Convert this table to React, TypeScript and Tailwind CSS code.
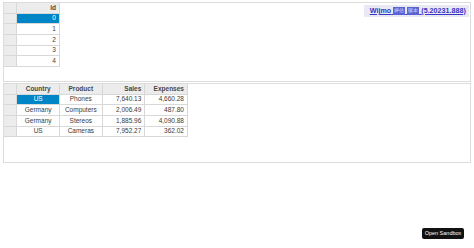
import React from "react";

const font = "font-['Liberation_Sans',Arial,sans-serif]";

type Align = "left" | "center" | "right";

function Cell({
  children,
  w = "w-[42.67px]",
  align = "right",
  kind = "data",
}: {
  children?: React.ReactNode;
  w?: string;
  align?: Align;
  kind?: "data" | "header" | "rowhead" | "selected";
}) {
  const justify =
    align === "center" ? "justify-center" : align === "left" ? "justify-start" : "justify-end";
  const bg =
    kind === "header"
      ? "bg-[#ececec] font-bold text-[#474747]"
      : kind === "rowhead"
      ? "bg-[#ececec]"
      : kind === "selected"
      ? "bg-[#0085c7] text-white"
      : "bg-white text-[#3a3a3a]";
  return (
    <div
      className={`${w} shrink-0 h-full flex items-center ${justify} px-[3px] border-r border-b border-[#d8d8d8] ${bg}`}
    >
      {children}
    </div>
  );
}

function Row({ children }: { children: React.ReactNode }) {
  return <div className="flex h-[10.667px]">{children}</div>;
}

const RH = "w-[13.33px]";

const data = [
  { country: "US", product: "Phones", sales: "7,640.13", expenses: "4,660.28" },
  { country: "Germany", product: "Computers", sales: "2,006.49", expenses: "487.80" },
  { country: "Germany", product: "Stereos", sales: "1,885.96", expenses: "4,090.88" },
  { country: "US", product: "Cameras", sales: "7,952.27", expenses: "362.02" },
];

export default function App() {
  return (
    <div className={`relative w-[474px] h-[248px] bg-white ${font} text-[6.5px] leading-none`}>
      <div className="pt-[2px] px-[3px] flex flex-col gap-[1px]">
        {/* Grid 1 */}
        <div className="relative h-[80px] border border-[#dcdcdc] overflow-hidden">
          <div className="flex flex-col">
            <Row>
              <Cell w={RH} kind="rowhead" />
              <Cell kind="header" align="right">id</Cell>
            </Row>
            {[0, 1, 2, 3, 4].map((i) => (
              <Row key={i}>
                <Cell w={RH} kind="rowhead" />
                <Cell kind={i === 0 ? "selected" : "data"} align="right">
                  {i}
                </Cell>
              </Row>
            ))}
          </div>
          <div className="absolute top-[2px] right-[1px] bg-[#e9e9f3] pl-[6px] pr-[3px] h-[12px] flex items-center">
            <a className="text-[7.2px] font-bold text-[#3535c8] underline whitespace-pre">
              Wijmo{" "}
              <span className="inline-block align-middle w-[12px] h-[8px] leading-[8px] text-center bg-[#5a62d6] text-[#dfe2ff] text-[4.5px] font-normal">
                评估
              </span>{" "}
              <span className="inline-block align-middle w-[12px] h-[8px] leading-[8px] text-center bg-[#5a62d6] text-[#dfe2ff] text-[4.5px] font-normal">
                版本
              </span>{" "}
              (5.20231.888)
            </a>
          </div>
        </div>

        {/* Grid 2 */}
        <div className="relative h-[80px] border border-[#dcdcdc] overflow-hidden">
          <div className="flex flex-col">
            <Row>
              <Cell w={RH} kind="rowhead" />
              <Cell kind="header" align="center">Country</Cell>
              <Cell kind="header" align="center">Product</Cell>
              <Cell kind="header" align="right">Sales</Cell>
              <Cell kind="header" align="right">Expenses</Cell>
            </Row>
            {data.map((d, i) => (
              <Row key={i}>
                <Cell w={RH} kind="rowhead" />
                <Cell kind={i === 0 ? "selected" : "data"} align="center">
                  {d.country}
                </Cell>
                <Cell align="center">{d.product}</Cell>
                <Cell align="right">{d.sales}</Cell>
                <Cell align="right">{d.expenses}</Cell>
              </Row>
            ))}
          </div>
        </div>
      </div>

      <button className="absolute right-[10px] bottom-[9px] w-[42px] h-[11px] rounded-[2px] bg-[#111111] text-white text-[5.5px] flex items-center justify-center">
        Open Sandbox
      </button>
    </div>
  );
}
